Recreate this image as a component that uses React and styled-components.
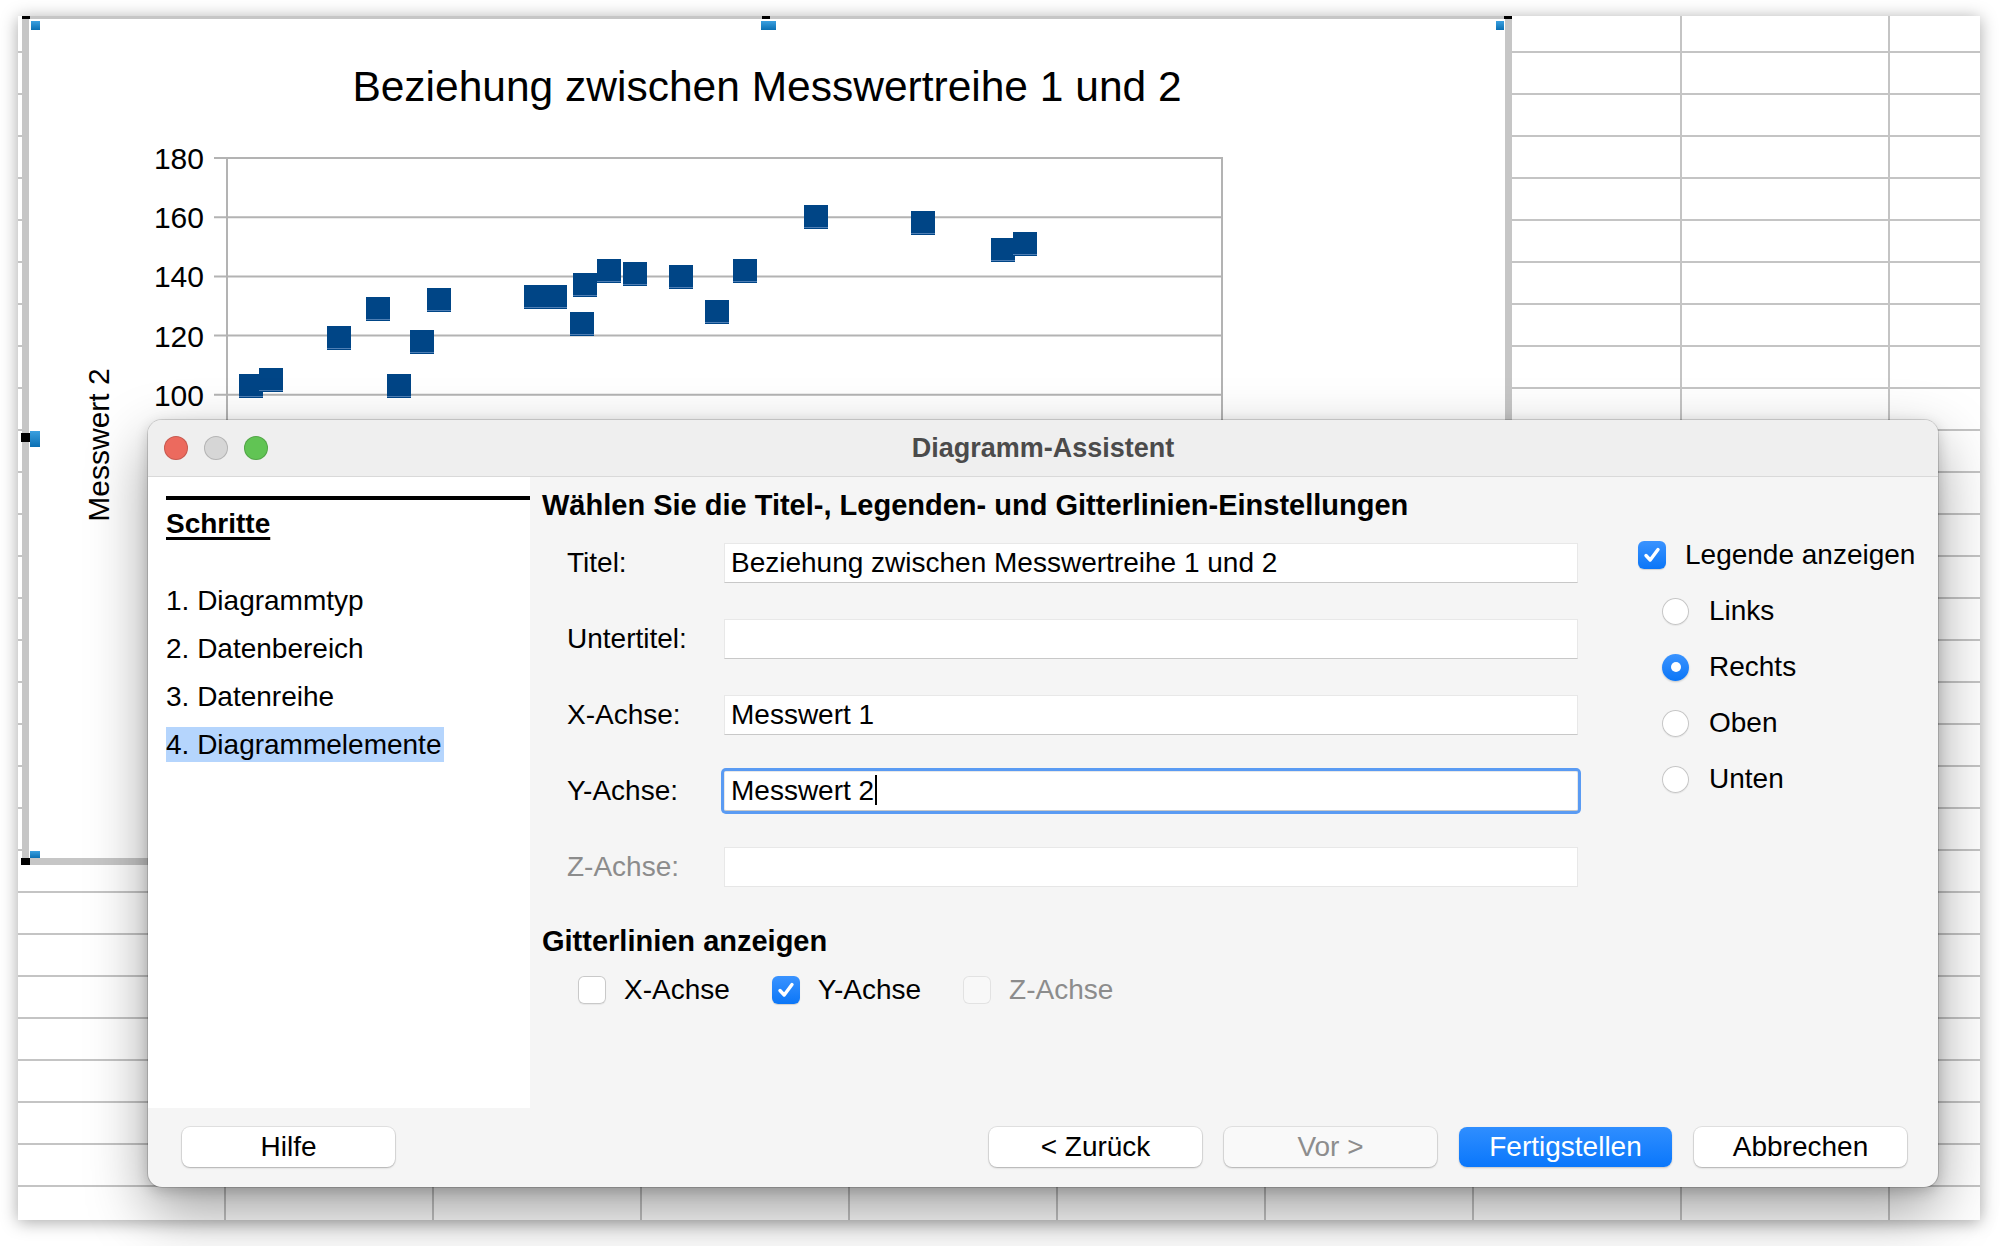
import React from 'react';
import styled, { createGlobalStyle } from 'styled-components';

const GlobalStyle = createGlobalStyle`
  html, body {
    margin: 0;
    padding: 0;
    background: #ffffff;
  }
  body {
    font-family: "Liberation Sans", Arial, Helvetica, sans-serif;
    color: #000;
  }
  * {
    box-sizing: border-box;
  }
`;

const Desktop = styled.div`
  position: relative;
  width: 2000px;
  height: 1246px;
  overflow: hidden;
  background: #ffffff;
  padding: 16px 20px 26px 18px;
`;

const Sheet = styled.div`
  position: relative;
  width: 100%;
  height: 100%;
  background-color: #ffffff;
  background-image:
    linear-gradient(to right, transparent 206px, #c4c4c4 206px, #c4c4c4 208px, transparent 208px),
    linear-gradient(to bottom, transparent 40px, #c4c4c4 40px, #c4c4c4 42px);
  background-size: 208px 100%, 100% 42px;
  background-position: 0 0, 0 -5px;
  box-shadow: 0 2px 16px rgba(0, 0, 0, 0.35);
`;

const ChartFrame = styled.div`
  position: absolute;
  left: 4px;
  top: 0;
  width: 1490px;
  height: 849px;
  background: #ffffff;
  border: 7px solid #c6c6c6;
  border-top-width: 3px;
  display: flex;
  flex-direction: column;
`;

const ChartTitle = styled.div`
  margin-top: 44px;
  height: 48px;
  line-height: 48px;
  text-align: center;
  font-size: 42.5px;
  color: #000;
`;

const Handle = styled.div`
  position: absolute;
  left: ${p => p.$x}px;
  top: ${p => p.$y}px;
  width: ${p => p.$w}px;
  height: ${p => p.$h}px;
  background: ${p => (p.$dark ? '#000' : 'linear-gradient(#3aa0e0, #0a6fb3)')};
`;

const Dialog = styled.div`
  position: absolute;
  left: 148px;
  top: 420px;
  width: 1790px;
  height: 767px;
  background: #f5f5f5;
  border-radius: 14px;
  overflow: hidden;
  box-shadow: 0 0 0 1px rgba(0, 0, 0, 0.14), 0 24px 60px rgba(0, 0, 0, 0.38), 0 4px 14px rgba(0, 0, 0, 0.18);
  display: flex;
  flex-direction: column;
`;

const TitleBar = styled.div`
  height: 57px;
  flex: none;
  background: #efefef;
  border-bottom: 1px solid #d9d9d9;
  display: grid;
  grid-template-columns: 1fr auto 1fr;
  align-items: center;
  padding: 0 16px;
`;

const Lights = styled.div`
  display: flex;
  gap: 16px;
`;

const Light = styled.span`
  width: 24px;
  height: 24px;
  border-radius: 50%;
  background: ${p => p.$color};
  box-shadow: inset 0 0 0 1px rgba(0, 0, 0, 0.16);
`;

const WindowTitle = styled.div`
  font-size: 27px;
  font-weight: bold;
  color: #4b4b4b;
`;

const Body = styled.div`
  height: 631px;
  flex: none;
  display: flex;
`;

const Sidebar = styled.div`
  width: 382px;
  background: #ffffff;
  padding-top: 19px;
`;

const Rule = styled.div`
  margin-left: 18px;
  height: 4px;
  background: #000;
`;

const StepsTitle = styled.div`
  margin: 7px 0 0 18px;
  font-size: 28px;
  line-height: 34px;
  font-weight: bold;
  text-decoration: underline;
  text-decoration-thickness: 3px;
  text-underline-offset: 4px;
`;

const StepList = styled.div`
  margin: 42px 0 0 18px;
  display: flex;
  flex-direction: column;
  align-items: flex-start;
  gap: 13px;
`;

const Step = styled.div`
  font-size: 28px;
  line-height: 35px;
  padding-right: 3px;
  background: ${p => (p.$active ? '#b5d5fd' : 'transparent')};
`;

const Content = styled.div`
  flex: 1;
  padding: 11px 0 0 12px;
`;

const Heading = styled.div`
  font-size: 29px;
  line-height: 34px;
  font-weight: bold;
  margin-top: ${p => p.$top || 0}px;
`;

const TopRow = styled.div`
  display: flex;
  align-items: flex-start;
`;

const FormGrid = styled.div`
  margin: 21px 0 0 25px;
  display: grid;
  grid-template-columns: 157px 854px;
  row-gap: 36px;
  align-items: center;
`;

const Label = styled.div`
  font-size: 28px;
  color: ${p => (p.$disabled ? '#8c8c8c' : '#000')};
`;

const Field = styled.div`
  height: 40px;
  background: #ffffff;
  border: 1px solid #e8e8e8;
  border-bottom-color: ${p => (p.$disabled ? '#e6e6e6' : '#c8c8c8')};
  padding-left: 6px;
  font-size: 28px;
  line-height: 38px;
  white-space: nowrap;
  box-shadow: ${p => (p.$focus ? '0 0 0 3px #5a9bf3' : 'none')};
  border-radius: ${p => (p.$focus ? '2px' : '0')};
`;

const Caret = styled.span`
  display: inline-block;
  width: 2px;
  height: 30px;
  margin-left: 1px;
  background: #000;
  vertical-align: -5px;
`;

const LegendPanel = styled.div`
  margin: 19px 0 0 60px;
  display: flex;
  flex-direction: column;
  gap: 28px;
`;

const LegendOptions = styled.div`
  margin-left: 24px;
  display: flex;
  flex-direction: column;
  gap: 28px;
`;

const Option = styled.div`
  display: flex;
  align-items: center;
  gap: ${p => p.$gap || 18}px;
  height: 28px;
  font-size: 28px;
  color: ${p => (p.$disabled ? '#8c8c8c' : '#000')};
`;

const Box = styled.span`
  width: 28px;
  height: 28px;
  flex: none;
  border-radius: 6px;
  display: flex;
  align-items: center;
  justify-content: center;
  background: ${p => (p.$checked ? 'linear-gradient(#3a93ff, #0b76f7)' : p.$disabled ? '#f8f8f8' : '#ffffff')};
  box-shadow: ${p =>
    p.$checked
      ? '0 1px 1px rgba(0, 0, 0, 0.15)'
      : p.$disabled
      ? 'inset 0 0 0 1px #e2e2e2'
      : 'inset 0 0 0 1px #c9c9c9, 0 1px 1px rgba(0, 0, 0, 0.06)'};
`;

const RadioDot = styled.span`
  width: 27px;
  height: 27px;
  flex: none;
  border-radius: 50%;
  display: flex;
  align-items: center;
  justify-content: center;
  background: ${p => (p.$checked ? 'linear-gradient(#3a93ff, #0b76f7)' : '#ffffff')};
  box-shadow: ${p =>
    p.$checked ? '0 1px 2px rgba(0, 0, 0, 0.2)' : 'inset 0 0 0 1px #c6c6c6, 0 1px 1px rgba(0, 0, 0, 0.06)'};

  &::after {
    content: '';
    display: ${p => (p.$checked ? 'block' : 'none')};
    width: 10px;
    height: 10px;
    border-radius: 50%;
    background: #ffffff;
  }
`;

const GridOptions = styled.div`
  margin: 18px 0 0 36px;
  display: flex;
  gap: 42px;
`;

const Footer = styled.div`
  flex: 1;
  display: flex;
  justify-content: space-between;
  padding: 19px 31px 0 34px;
`;

const ButtonGroup = styled.div`
  display: flex;
  gap: 22px;
`;

const Button = styled.button`
  width: 213px;
  height: 40px;
  border: none;
  border-radius: 8px;
  font-family: "Liberation Sans", Arial, Helvetica, sans-serif;
  font-size: 28px;
  padding: 0;
  color: ${p => (p.$primary ? '#ffffff' : p.$disabled ? '#8d8d8d' : '#000')};
  background: ${p =>
    p.$primary ? 'linear-gradient(#2f8eff, #0a77fb)' : p.$disabled ? '#f9f9f9' : '#ffffff'};
  box-shadow: ${p =>
    p.$primary
      ? '0 1px 2px rgba(0, 0, 0, 0.2)'
      : '0 0 0 1px rgba(0, 0, 0, 0.08), 0 1px 2px rgba(0, 0, 0, 0.22)'};
`;

const Check = () => (
  <svg width="20" height="20" viewBox="0 0 20 20">
    <path d="M4 10.5 L8.2 15 L16 4.5" fill="none" stroke="#ffffff" strokeWidth="3.4" strokeLinecap="round" strokeLinejoin="round" />
  </svg>
);

const points = [
  [251, 386], [271, 380], [339, 338], [378, 309], [399, 386], [422, 342], [439, 300],
  [536, 297], [555, 297], [582, 324], [585, 285], [609, 271], [635, 274], [681, 277],
  [717, 312], [745, 271], [816, 217], [923, 223], [1003, 250], [1025, 244],
];

// only the labels above the dialog are visible, the gridlines run on under it
const labels = [180, 160, 140, 120, 100];
const ticks = [180, 160, 140, 120, 100, 80, 60, 40, 20, 0];
const yOf = v => 158 + (180 - v) * 2.96;

function ScatterPlot() {
  return (
    <svg width="1476" height="747" viewBox="29 111 1476 747">
      {ticks.map(v => (
        <line key={v} x1="214" x2="1222" y1={yOf(v)} y2={yOf(v)} stroke="#b3b3b3" strokeWidth="2" />
      ))}
      {labels.map(v => (
        <text key={v} x="204" y={yOf(v) + 11} textAnchor="end" fontSize="30" fontFamily="Liberation Sans, Arial, sans-serif">
          {v}
        </text>
      ))}
      <line x1="227" x2="227" y1="157" y2={yOf(0)} stroke="#b3b3b3" strokeWidth="2" />
      <line x1="1222" x2="1222" y1="157" y2={yOf(0)} stroke="#b3b3b3" strokeWidth="2" />
      <text
        x="0"
        y="0"
        transform="translate(109 445) rotate(-90)"
        textAnchor="middle"
        fontSize="30"
        fontFamily="Liberation Sans, Arial, sans-serif"
      >
        Messwert 2
      </text>
      {points.map(([x, y], i) => (
        <g key={i}>
          <rect x={x - 12} y={y - 12} width="24" height="24" fill="#004586" />
          <line x1={x - 12} x2={x + 12} y1={y + 10.5} y2={y + 10.5} stroke="#4f7fb5" strokeWidth="1" />
        </g>
      ))}
    </svg>
  );
}

const handles = [
  { x: 4, y: 0, w: 8, h: 3, dark: true },
  { x: 13, y: 5, w: 9, h: 9 },
  { x: 744, y: 0, w: 8, h: 3, dark: true },
  { x: 743, y: 5, w: 15, h: 9 },
  { x: 1486, y: 0, w: 8, h: 3, dark: true },
  { x: 1478, y: 5, w: 8, h: 9 },
  { x: 3, y: 417, w: 9, h: 9, dark: true },
  { x: 12, y: 415, w: 10, h: 16 },
  { x: 3, y: 842, w: 9, h: 7, dark: true },
  { x: 12, y: 835, w: 10, h: 7 },
];

const fields = [
  { label: 'Titel:', value: 'Beziehung zwischen Messwertreihe 1 und 2' },
  { label: 'Untertitel:', value: '' },
  { label: 'X-Achse:', value: 'Messwert 1' },
  { label: 'Y-Achse:', value: 'Messwert 2', focus: true },
  { label: 'Z-Achse:', value: '', disabled: true },
];

const steps = ['1. Diagrammtyp', '2. Datenbereich', '3. Datenreihe', '4. Diagrammelemente'];

export default function App() {
  return (
    <>
      <GlobalStyle />
      <Desktop>
        <Sheet>
          <ChartFrame>
            <ChartTitle>Beziehung zwischen Messwertreihe 1 und 2</ChartTitle>
            <ScatterPlot />
          </ChartFrame>
          {handles.map((h, i) => (
            <Handle key={i} $x={h.x} $y={h.y} $w={h.w} $h={h.h} $dark={h.dark} />
          ))}
        </Sheet>

        <Dialog>
          <TitleBar>
            <Lights>
              <Light $color="#ec6a5e" />
              <Light $color="#d6d6d6" />
              <Light $color="#61c454" />
            </Lights>
            <WindowTitle>Diagramm-Assistent</WindowTitle>
            <div />
          </TitleBar>

          <Body>
            <Sidebar>
              <Rule />
              <StepsTitle>Schritte</StepsTitle>
              <StepList>
                {steps.map((s, i) => (
                  <Step key={s} $active={i === 3}>{s}</Step>
                ))}
              </StepList>
            </Sidebar>

            <Content>
              <Heading>Wählen Sie die Titel-, Legenden- und Gitterlinien-Einstellungen</Heading>
              <TopRow>
                <FormGrid>
                  {fields.map(f => (
                    <React.Fragment key={f.label}>
                      <Label $disabled={f.disabled}>{f.label}</Label>
                      <Field $focus={f.focus} $disabled={f.disabled}>
                        {f.value}
                        {f.focus && <Caret />}
                      </Field>
                    </React.Fragment>
                  ))}
                </FormGrid>

                <LegendPanel>
                  <Option $gap={19}>
                    <Box $checked><Check /></Box>
                    Legende anzeigen
                  </Option>
                  <LegendOptions>
                    {['Links', 'Rechts', 'Oben', 'Unten'].map(r => (
                      <Option key={r} $gap={20}>
                        <RadioDot $checked={r === 'Rechts'} />
                        {r}
                      </Option>
                    ))}
                  </LegendOptions>
                </LegendPanel>
              </TopRow>

              <Heading $top={37}>Gitterlinien anzeigen</Heading>
              <GridOptions>
                <Option>
                  <Box />
                  X-Achse
                </Option>
                <Option>
                  <Box $checked><Check /></Box>
                  Y-Achse
                </Option>
                <Option $disabled>
                  <Box $disabled />
                  Z-Achse
                </Option>
              </GridOptions>
            </Content>
          </Body>

          <Footer>
            <Button>Hilfe</Button>
            <ButtonGroup>
              <Button>&lt; Zurück</Button>
              <Button $disabled>Vor &gt;</Button>
              <Button $primary>Fertigstellen</Button>
              <Button>Abbrechen</Button>
            </ButtonGroup>
          </Footer>
        </Dialog>
      </Desktop>
    </>
  );
}
